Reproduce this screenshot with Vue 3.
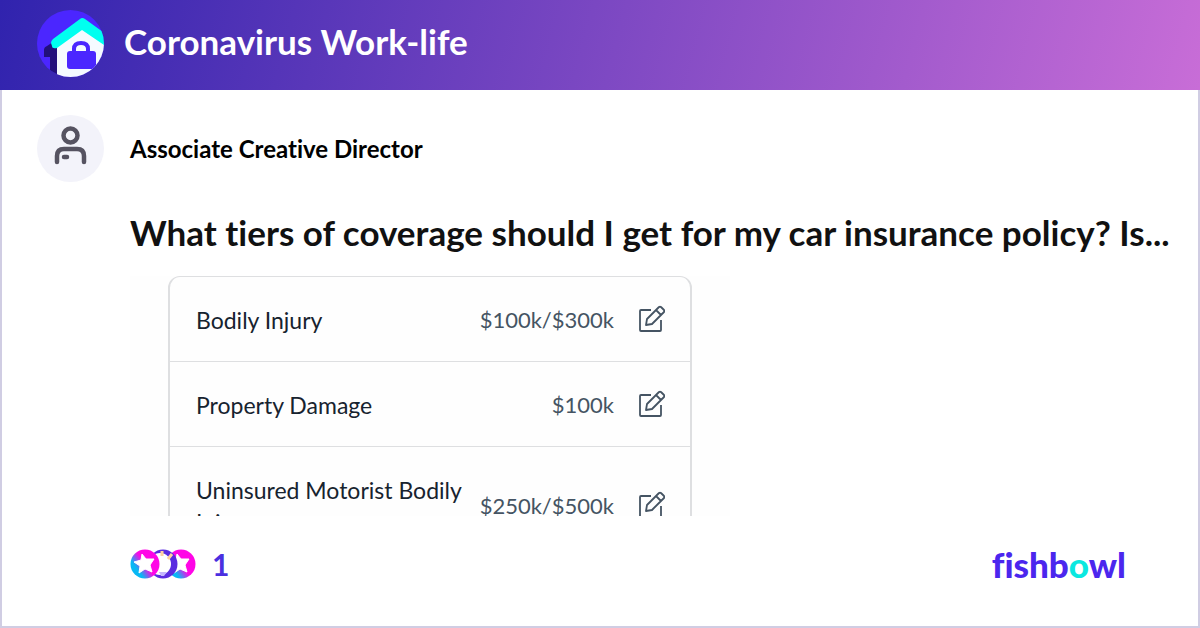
<template>
    <div class="card">
        <header class="bowl">
            <svg class="bowl-icon" viewBox="0 0 67 67" aria-hidden="true">
                <defs>
                    <clipPath id="bowl-clip"><circle cx="33.5" cy="33.5" r="33.5" /></clipPath>
                </defs>
                <g clip-path="url(#bowl-clip)">
                    <rect width="67" height="67" fill="#4b26ff" />
                    <path d="M7 40 Q7 37 10 36 L16 32 H24 V67 H13 V47 H7 Z" fill="#22107c" />
                    <path d="M20 36 L45 18 L67 34 V67 H20 Z" fill="#f5faff" />
                    <path d="M14 33 Q14 31 16 29 L43 9 Q45 7 48 9 L70 25 V37 L45 20 L20 38 Q15 39 15 36 Z" fill="#00fff0" />
                    <path d="M33 41 H56 Q59 41 59 44 V59 H33 Q30 59 30 56 V44 Q30 41 33 41 Z" fill="#4b26ff" />
                    <path d="M37 42 V39 Q37 33 44 33 Q51 33 51 39 V42" fill="none" stroke="#4b26ff" stroke-width="4" />
                    <path d="M40 41 Q40 36 44 36 Q49 36 49 41 Z" fill="#f5faff" />
                </g>
            </svg>
            <div class="bowl-name">Coronavirus Work-life</div>
        </header>

        <main class="post">
            <div class="author">
                <svg class="avatar" viewBox="0 0 67 67" aria-hidden="true">
                    <circle cx="33.5" cy="33.5" r="33.5" fill="#f3f3fa" />
                    <g fill="none" stroke="#565361" stroke-width="4.5" stroke-linecap="round">
                        <circle cx="33.5" cy="20.5" r="7" />
                        <path d="M20 47 V41 Q20 34 27 34 H40 Q47 34 47 41 V47" />
                        <path d="M27 42 H30" />
                    </g>
                </svg>
                <div class="author-name">Associate Creative Director</div>
            </div>

            <div class="content">
                <h1>What tiers of coverage should I get for my car insurance policy? Is...</h1>

                <div class="attachment">
                    <table>
                        <tbody>
                            <tr v-for="item in coverages" :key="item.label">
                                <th scope="row">{{ item.label }}</th>
                                <td class="amount">{{ item.amount }}</td>
                                <td class="action">
                                    <button type="button" :aria-label="'Edit ' + item.label">
                                        <svg viewBox="0 0 26 28" aria-hidden="true">
                                            <path d="M12 5 H2 Q1 5 1 6 V25 Q1 26 2 26 H21 Q22 26 22 25 V15" />
                                            <path d="M7 20 L8 14 L20 2 Q21 1.5 22 2 L25 5 Q25.5 6 25 7 L13 19 Z M17 5 L22 10" />
                                        </svg>
                                    </button>
                                </td>
                            </tr>
                        </tbody>
                    </table>
                </div>

                <footer>
                    <div class="reactions">
                        <svg viewBox="0 0 66 30" aria-hidden="true">
                            <defs>
                                <linearGradient id="like" x1="0.1" y1="0.8" x2="0.8" y2="0.3">
                                    <stop offset="0.2" stop-color="#08b8f4" />
                                    <stop offset="0.6" stop-color="#ff05e6" />
                                </linearGradient>
                            </defs>
                            <circle cx="51" cy="15" r="14.5" fill="url(#like)" />
                            <path :d="star" transform="translate(35 0)" class="star" />
                            <circle cx="33" cy="15" r="14.5" fill="#5a2ce0" />
                            <circle cx="30" cy="15" r="11" fill="#fff" />
                            <path d="M32 2 V7 M42 5 L38 10" stroke="#ffd1a0" stroke-width="3" />
                            <path d="M29 23 H37 L34 27 H31 Z" fill="#c3b4ff" />
                            <circle cx="15" cy="15" r="14.5" fill="url(#like)" />
                            <path :d="star" class="star" />
                        </svg>
                        <span>1</span>
                    </div>
                    <div class="brand">fishb<span>o</span>wl</div>
                </footer>
            </div>
        </main>
    </div>
</template>

<script setup>
const coverages = [
    { label: 'Bodily Injury', amount: '$100k/$300k' },
    { label: 'Property Damage', amount: '$100k' },
    { label: 'Uninsured Motorist Bodily Injury', amount: '$250k/$500k' },
]

const star = 'M12 5 L16 10 L24 10 L20 16 L22 23 L15 20 L9 24 L10 17 L4 13 L11 11 Z'
</script>

<style>
body {
    margin: 0;
}
</style>

<style scoped>
.card {
    box-sizing: border-box;
    min-height: 100vh;
    border: 2px solid #d0cde3;
    border-top: 0;
    background: #fff;
    color: #000;
    font-family: Lato, sans-serif;
    font-variant-ligatures: none;
}

.bowl {
    display: flex;
    align-items: center;
    gap: 20px;
    height: 90px;
    margin: 0 -2px;
    padding: 0 37px 4px;
    box-sizing: border-box;
    background: linear-gradient(105deg, #3023ae, #c86dd7);
}

.bowl-icon,
.avatar {
    flex: none;
    width: 67px;
    height: 67px;
}

.bowl-name {
    padding-bottom: 4px;
    color: #fff;
    font-size: 35px;
    font-weight: 700;
    line-height: 44px;
}

.post {
    padding: 25px 32px 0 35px;
}

.author {
    display: flex;
    align-items: center;
    gap: 26px;
}

.author-name {
    font-size: 24px;
    font-weight: 700;
}

.content {
    padding-left: 93px;
}

h1 {
    margin: 26px 0 20px;
    color: #111;
    font-size: 35px;
    font-weight: 700;
    line-height: 48px;
    white-space: nowrap;
}

.attachment {
    height: 240px;
    max-width: 600px;
    padding: 0 38px;
    box-sizing: border-box;
    overflow: hidden;
    background: #fefefe;
}

table {
    width: 100%;
    border: 2px solid #dedfe1;
    border-top-width: 1px;
    border-radius: 12px;
    border-spacing: 0;
    font-size: 22px;
    line-height: 32px;
}

th,
td {
    box-sizing: border-box;
    height: 85px;
    padding: 2px 0 0;
    border-bottom: 1px solid #dedfe1;
}

tr:last-child th,
tr:last-child td {
    height: 116px;
    border-bottom: 0;
}

th {
    padding-left: 26px;
    color: #17232f;
    font-size: 23px;
    font-weight: 400;
    text-align: left;
}

.amount {
    color: #455463;
    text-align: right;
    white-space: nowrap;
}

.action {
    width: 76px;
    padding: 0;
}

button {
    display: block;
    margin: 0 auto;
    padding: 0;
    border: 0;
    background: none;
}

button svg {
    display: block;
    width: 26px;
    height: 28px;
    fill: none;
    stroke: #455463;
    stroke-width: 1.8;
    stroke-linejoin: round;
}

footer {
    display: flex;
    align-items: center;
    justify-content: space-between;
    margin-top: 24px;
    padding-right: 40px;
}

.reactions {
    display: flex;
    align-items: center;
    gap: 16px;
    color: #4b2fe0;
    font-size: 30px;
    font-weight: 700;
}

.reactions svg {
    width: 66px;
    height: 30px;
}

.star {
    fill: #fff;
    stroke: #fff;
    stroke-width: 1;
    stroke-linejoin: round;
}

.brand {
    color: #4b26ee;
    font-size: 35px;
    font-weight: 900;
    line-height: 48px;
}

.brand span {
    color: #0be8e0;
}
</style>
